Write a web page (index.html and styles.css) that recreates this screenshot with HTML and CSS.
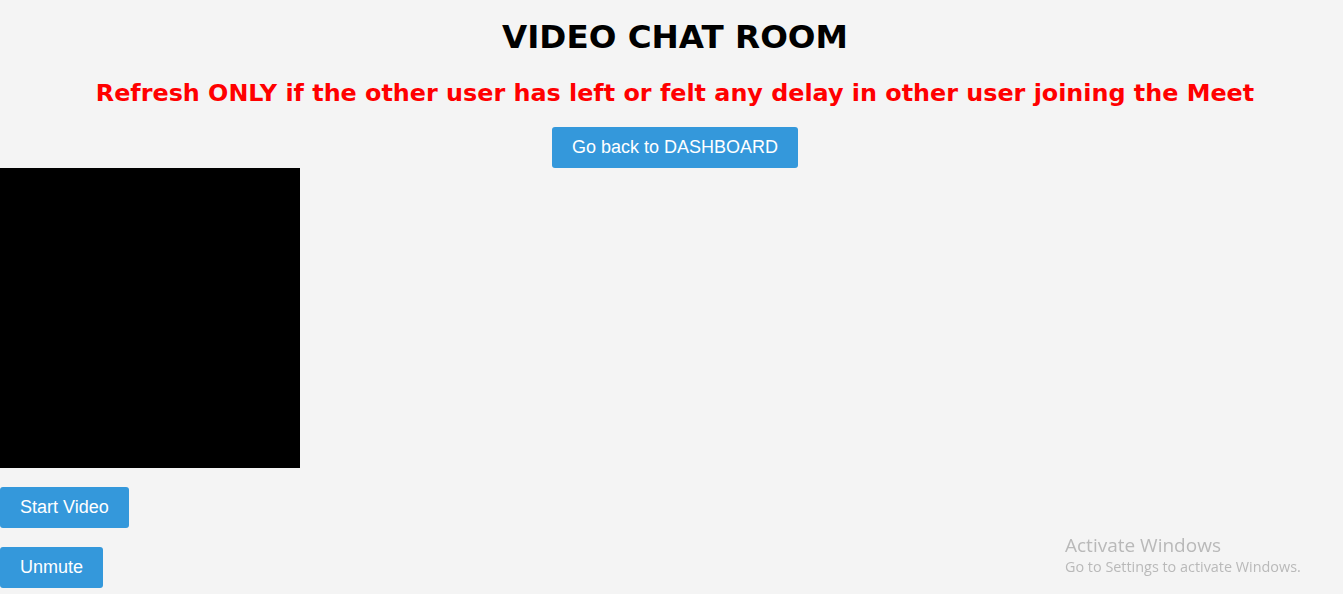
FILE: index.html
```html
<!DOCTYPE html>
<html>
<head>
<meta charset="utf-8">
<title>Video Chat Room</title>
<link rel="stylesheet" href="styles.css">
</head>
<body>
<header class="top">
  <h1 class="title">VIDEO CHAT ROOM</h1>
  <h2 class="warning">Refresh ONLY if the other user has left or felt any delay in other user joining the Meet</h2>
  <button class="btn">Go back to DASHBOARD</button>
</header>
<main class="room">
  <div class="video"></div>
  <div class="controls">
    <button class="btn">Start Video</button>
    <button class="btn">Unmute</button>
  </div>
</main>
<div class="watermark">
  <div class="wm-title">Activate Windows</div>
  <div class="wm-sub">Go to Settings to activate Windows.</div>
</div>
</body>
</html>
```
FILE: styles.css
```css
html, body {
  margin: 0;
  padding: 0;
  background: #f4f4f4;
  height: 100%;
  overflow: hidden;
}
body {
  font-family: "DejaVu Sans", Verdana, sans-serif;
}
.top {
  display: flex;
  flex-direction: column;
  align-items: center;
  padding-left: 7px;
}
.title {
  margin: 17px 0 0;
  font-size: 32.6px;
  line-height: 40px;
  font-weight: bold;
  color: #000;
}
.warning {
  margin: 21px 0 0;
  font-size: 23.85px;
  line-height: 30px;
  font-weight: bold;
  color: #ff0000;
  white-space: nowrap;
}
.btn {
  font-family: "Liberation Sans", Arial, sans-serif;
  font-size: 18px;
  line-height: 21px;
  padding: 10px 20px;
  background: #3498db;
  color: #fff;
  border: none;
  border-radius: 3px;
  margin-top: 19px;
  cursor: pointer;
}
.room {
  display: flex;
  flex-direction: column;
  align-items: flex-start;
}
.video {
  width: 300px;
  height: 300px;
  background: #000;
}
.controls {
  display: flex;
  flex-direction: column;
  align-items: flex-start;
}
.watermark {
  position: fixed;
  left: 1065px;
  top: 533px;
  font-family: "Open Sans", "Noto Sans", sans-serif;
  color: #b9b9b9;
}
.wm-title {
  font-size: 19px;
  line-height: 24px;
}
.wm-sub {
  font-size: 14.4px;
  line-height: 20px;
}
```
